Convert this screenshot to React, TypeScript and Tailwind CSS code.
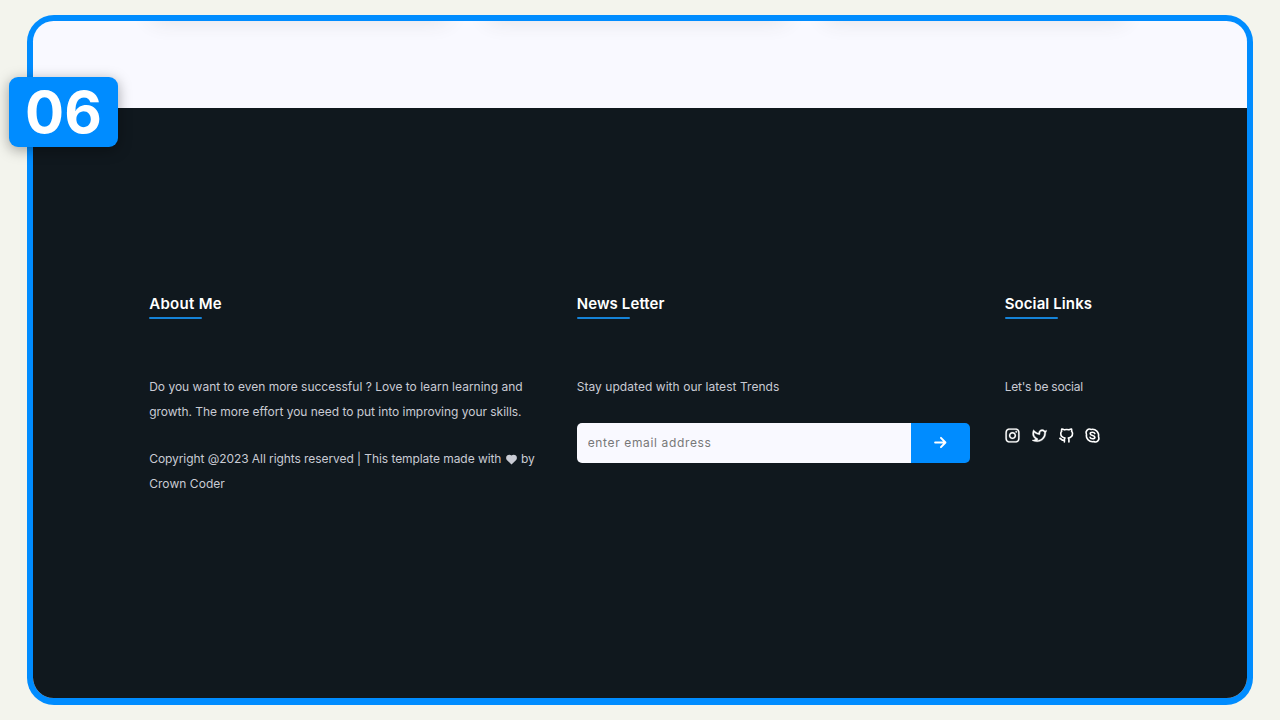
import type { ReactNode } from "react";
import { RiInstagramLine, RiTwitterLine } from "react-icons/ri";
import { BiSolidHeart } from "react-icons/bi";

function GithubIcon({ className }: { className?: string }) {
  return (
    <svg
      viewBox="0 0 24 24"
      fill="none"
      stroke="currentColor"
      strokeLinecap="round"
      strokeLinejoin="round"
      className={className}
    >
      <path d="M15.400 21.200v-3.200a3.400 3.400 0 0 0-.9-2.500c3-.4 6-1.500 6-6.200a5 5 0 0 0-1.300-3.400 4.400 4.400 0 0 0-.1-3.100s-1.200-.3-3.700 1.200a13 13 0 0 0-6.400 0C6.500 2.500 5.300 2.800 5.300 2.800a4.400 4.400 0 0 0-.1 3.100A5 5 0 0 0 3.900 9.300c0 4.700 3 5.800 6 6.200a3.400 3.400 0 0 0-.9 2.500v3.200" />
      <path d="M9 18.600c-3.700 1-4-2-6.300-2.500" />
    </svg>
  );
}

function SkypeIcon({ className }: { className?: string }) {
  return (
    <svg
      viewBox="0 0 24 24"
      fill="none"
      stroke="currentColor"
      strokeLinecap="round"
      strokeLinejoin="round"
      className={className}
    >
      <path d="M20.500 13.800A8.700 8.700 0 0 0 10.200 3.500a5 5 0 0 0-6.700 6.700 8.700 8.700 0 0 0 10.300 10.300 5 5 0 0 0 6.700-6.700Z" />
      <path d="M15.300 9.300c-.5-1.300-1.700-1.900-3.300-1.900-1.900 0-3.300.8-3.300 2.200 0 3.200 6.700 1.500 6.700 4.800 0 1.400-1.400 2.200-3.400 2.200-1.700 0-3-.7-3.500-2" />
    </svg>
  );
}

function ArrowIcon({ className }: { className?: string }) {
  return (
    <svg
      viewBox="0 0 14 14"
      fill="none"
      stroke="currentColor"
      strokeWidth="2.1"
      strokeLinecap="round"
      strokeLinejoin="round"
      className={className}
    >
      <path d="M1.200 7h11M7.500 2 12.300 7l-4.800 5" />
    </svg>
  );
}

const socials = [
  { name: "Instagram", icon: RiInstagramLine, style: "size-[17px] stroke-[0.3px]" },
  { name: "Twitter", icon: RiTwitterLine, style: "size-[17.5px] stroke-[0.5px]" },
  { name: "Github", icon: GithubIcon, style: "size-[17px] stroke-[2.3px]" },
  { name: "Skype", icon: SkypeIcon, style: "size-[17px] stroke-[2.2px]" },
];

function FooterColumn({
  title,
  spacing,
  children,
}: {
  title: string;
  spacing: string;
  children: ReactNode;
}) {
  return (
    <div>
      <h3
        className={`h-[22px] text-[15px] leading-[22px] font-semibold text-white whitespace-nowrap ${spacing}`}
      >
        {title}
      </h3>
      <div className="mt-[2px] mb-[56px] h-[2px] w-[53px] rounded-full bg-[#1583d8]" />
      {children}
    </div>
  );
}

export default function App() {
  return (
    <div className="relative h-[720px] w-[1280px] overflow-hidden bg-[#f3f4ed] pt-[15px] pl-[27px] font-['Inter',sans-serif]">
      <div className="flex h-[689.5px] w-[1226px] rounded-[27px] bg-[#008cff] pt-[6px] pr-[6px] pb-[6.5px] pl-[6.4px]">
        <div className="flex flex-1 flex-col overflow-hidden rounded-[20.5px] bg-[#f9f9ff]">
          {/* bottom edge of the cards scrolled out of view */}
          <div className="h-[87px] shrink-0">
            <div className="-mt-[50px] flex gap-[42px] pl-[120px]">
              <div className="h-[42px] w-[294px] shadow-[0_7px_22px_rgba(70,65,60,0.14)]" />
              <div className="h-[42px] w-[296px] shadow-[0_7px_22px_rgba(70,65,60,0.14)]" />
              <div className="h-[42px] w-[296px] shadow-[0_7px_22px_rgba(70,65,60,0.14)]" />
            </div>
          </div>

          <footer className="grid flex-1 grid-cols-[427.5px_428px_1fr] bg-[#10181e] pt-[185px] pl-[115.8px] text-[12px] leading-[24.7px] text-[#c9cbd4]">
            <FooterColumn title="About Me" spacing="tracking-[0.3px]">
              <p className="whitespace-nowrap">
                <span>
                  Do you want to even more successful ? Love to learn learning and
                </span>
                <br />
                <span className="tracking-[-0.03px]">
                  growth. The more effort you need to put into improving your skills.
                </span>
              </p>
              <p className="mt-[23px] whitespace-nowrap">
                <span className="tracking-[-0.07px]">
                  Copyright @2023 All rights reserved | This template made with{" "}
                  <BiSolidHeart className="-mt-[2px] inline size-[13px]" /> by
                </span>
                <br />
                <span className="tracking-[0.05px]">Crown Coder</span>
              </p>
            </FooterColumn>

            <FooterColumn title="News Letter" spacing="tracking-[0.1px]">
              <p className="tracking-[0.05px]">Stay updated with our latest Trends</p>
              <div className="mt-[23.3px] flex h-[39.5px] w-[393px] overflow-hidden rounded-[5px]">
                <input
                  type="email"
                  placeholder="enter email address"
                  className="w-[334px] bg-[#f9f9ff] px-[11px] pt-px text-[12px] tracking-[0.64px] text-[#777] outline-none placeholder:text-[#777]"
                />
                <button className="flex flex-1 items-center justify-center bg-[#008cff] text-white">
                  <ArrowIcon className="size-[13px]" />
                </button>
              </div>
            </FooterColumn>

            <FooterColumn title="Social Links" spacing="tracking-[0.1px]">
              <p className="tracking-[-0.23px]">Let's be social</p>
              <div className="-ml-[0.5px] mt-[27px] flex items-center gap-[9.5px] text-white">
                {socials.map(({ name, icon: Icon, style }) => (
                  <a key={name} aria-label={name}>
                    <Icon className={style} />
                  </a>
                ))}
              </div>
            </FooterColumn>
          </footer>
        </div>
      </div>

      <div className="absolute top-[77px] left-[9px] flex h-[70px] w-[109px] items-center justify-center rounded-[9px] bg-[#008cff] pb-px text-[58px] leading-none font-bold text-white shadow-[0_3px_14px_rgba(0,0,0,0.35)]">
        06
      </div>
    </div>
  );
}
